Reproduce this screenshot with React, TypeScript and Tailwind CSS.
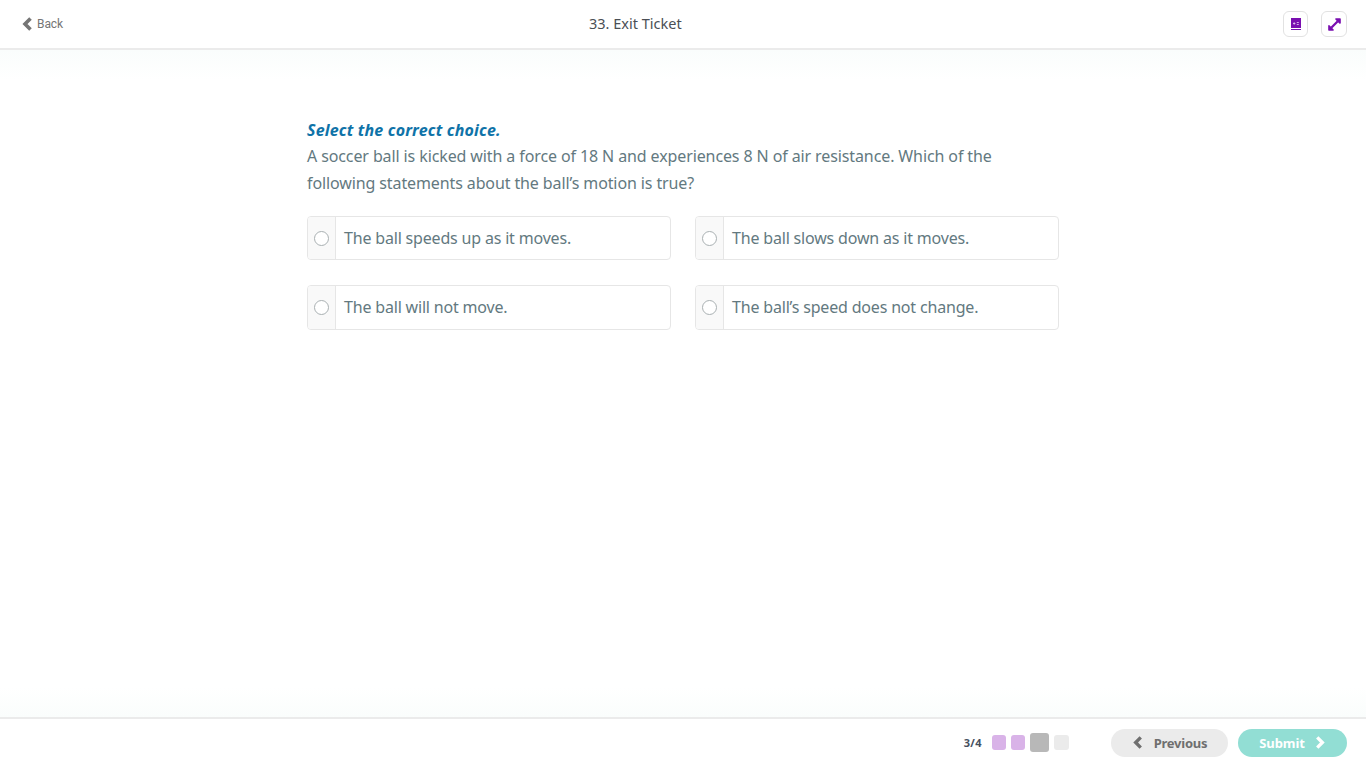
import React from "react";

const choices = [
  "The ball speeds up as it moves.",
  "The ball slows down as it moves.",
  "The ball will not move.",
  "The ball’s speed does not change.",
];

const Chevron = ({ dir, className }: { dir: "left" | "right"; className: string }) => (
  <svg viewBox="0 0 10 14" className={className} fill="none" stroke="currentColor" strokeWidth="3.6">
    <path d={dir === "left" ? "M8.5 1.5 L3 7 L8.5 12.5" : "M1.5 1.5 L7 7 L1.5 12.5"} />
  </svg>
);

const App: React.FC = () => {
  return (
    <div className="h-[768px] flex flex-col bg-white overflow-hidden font-['Noto_Sans',sans-serif]">
      <header className="h-[50px] shrink-0 border-b-2 border-[#ebebeb] flex items-center pl-[22px] pr-[19px]">
        <div className="w-[567px] flex items-center gap-[5px] text-[#757575]">
          <Chevron dir="left" className="w-[10px] h-[14px]" />
          <span className="text-[12px] font-['Roboto',sans-serif] tracking-[-0.1px]">Back</span>
        </div>
        <h1 className="text-[14.5px] text-[#4a4f55] mb-[1px]">33. Exit Ticket</h1>
        <div className="flex-1 flex justify-end gap-[13px]">
          <button className="w-[25px] h-[26px] rounded-md border border-[#e2e2e2] flex items-center justify-center">
            <svg viewBox="0 0 11 12" className="w-[11px] h-[12px]">
              <path d="M1 0h10v10H1z" fill="#7a0fb0" />
              <path d="M1 11h10v1H1z" fill="#7a0fb0" />
              <path d="M3 5.5h2.4M4.2 4.3v2.4M6.8 4.5h2M6.8 6.5h2" stroke="#e9d2f3" strokeWidth="0.8" />
            </svg>
          </button>
          <button className="w-[26px] h-[26px] rounded-md border border-[#e2e2e2] flex items-center justify-center">
            <svg viewBox="0 0 14 14" className="w-[13px] h-[13px]" fill="#7a0fb0" stroke="#7a0fb0" strokeWidth="1.6">
              <path d="M8.5 1h4.5v4.5z" strokeLinejoin="round" />
              <path d="M1 8.5v4.5h4.5z" strokeLinejoin="round" />
              <path d="M3.5 10.5l7-7" fill="none" strokeWidth="2.4" />
            </svg>
          </button>
        </div>
      </header>

      <main className="flex-1 bg-[linear-gradient(to_bottom,#fafdfc,#ffffff_30px,#ffffff_calc(100%-30px),#fafdfc)] pt-[68px]">
        <div className="w-[752px] ml-[307px]">
          <p className="text-[16px] leading-[24px] font-bold italic text-[#0f73a8] tracking-[0.17px]">
            Select the correct choice.
          </p>
          <p className="mt-[1px] w-[700px] text-[16px] leading-[27px] text-[#63797f] tracking-[-0.11px]">
            A soccer ball is kicked with a force of 18 N and experiences 8 N of air resistance. Which of the following
            statements about the ball’s motion is true?
          </p>
          <div className="grid grid-cols-2 gap-x-[24px] gap-y-[24.75px] mt-[18.75px]">
            {choices.map((choice) => (
              <label key={choice} className="h-[44.5px] flex rounded-[4px] border border-[#e6e6e6] overflow-hidden">
                <span className="w-[28px] shrink-0 bg-[#f9f9f9] border-r border-[#e6e6e6] flex items-center justify-center">
                  <span className="w-[15px] h-[15px] rounded-full border border-[#a9b0b2] bg-white" />
                </span>
                <span className="pl-[8px] flex items-center text-[16px] text-[#63797f] tracking-[-0.18px]">{choice}</span>
              </label>
            ))}
          </div>
        </div>
      </main>

      <footer className="h-[51px] shrink-0 border-t-2 border-[#ebebeb] flex items-center justify-end pr-[19px] pb-[2px]">
        <span className="text-[11px] font-bold text-[#46505f] mr-[10px] tracking-[0.4px] mt-[2px]">3/4</span>
        <div className="flex items-center gap-[5px] mr-[42px]">
          <span className="w-[14px] h-[15px] rounded-[3px] bg-[#d9b3e8]" />
          <span className="w-[14px] h-[15px] rounded-[3px] bg-[#d9b3e8]" />
          <span className="w-[19px] h-[19px] rounded-[3px] bg-[#b8b8b8]" />
          <span className="w-[15px] h-[15px] rounded-[3px] bg-[#ebebeb]" />
        </div>
        <button className="w-[117px] h-[28px] rounded-full bg-[#ebebeb] text-[#6f6f6f] flex items-center justify-center gap-[11px] text-[13px] font-bold tracking-[-0.25px] mr-[10px]">
          <Chevron dir="left" className="w-[11px] h-[13px]" />
          <span className="pt-[2px]">Previous</span>
        </button>
        <button className="w-[109px] h-[28px] rounded-full bg-[#92ded4] text-white flex items-center justify-center gap-[10px] text-[13px] font-bold tracking-[-0.1px]">
          <span className="pt-[2px]">Submit</span>
          <Chevron dir="right" className="w-[11px] h-[13px]" />
        </button>
      </footer>
    </div>
  );
};

export default App;
